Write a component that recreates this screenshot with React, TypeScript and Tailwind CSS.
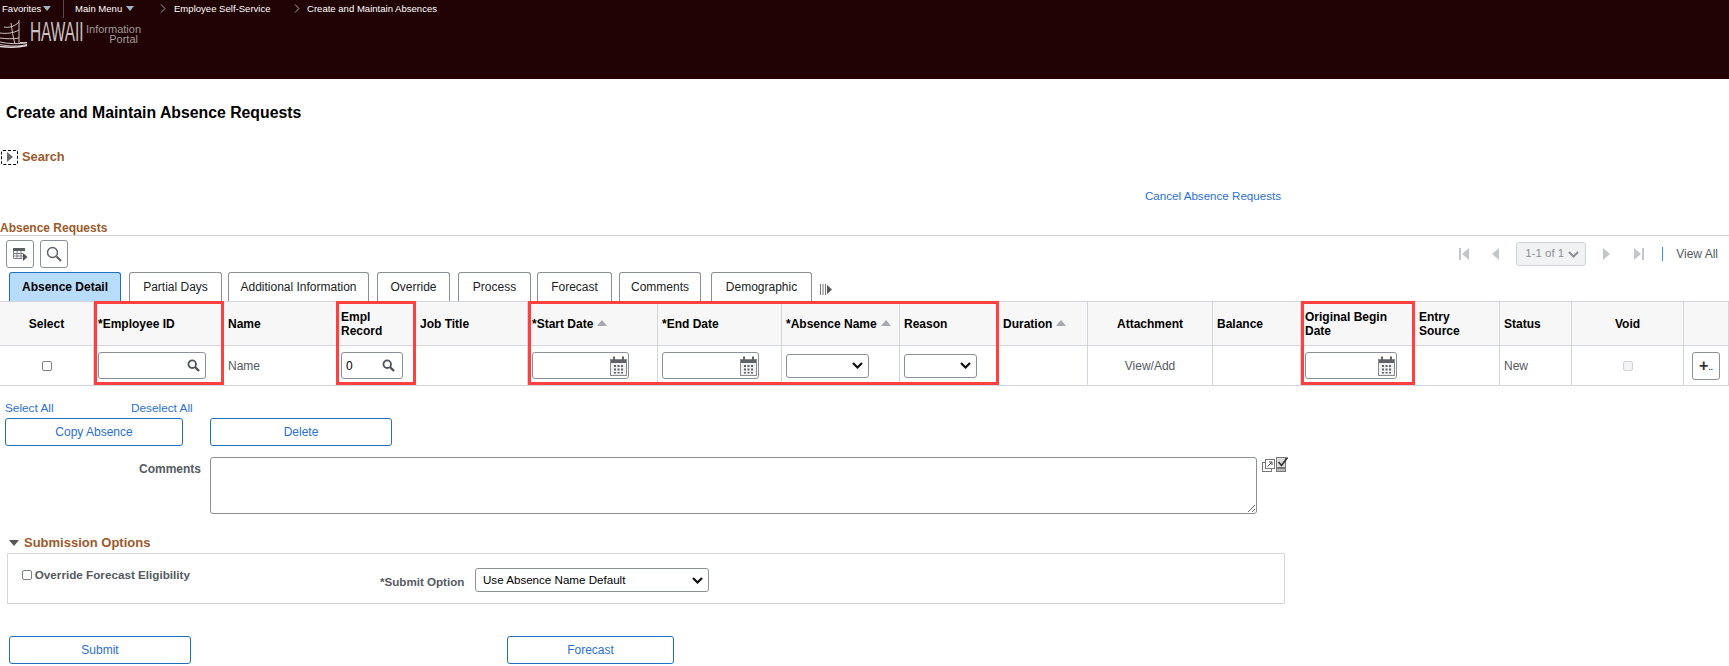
import React from 'react';

const widths = 'grid-cols-[94px_130px_113px_79px_112px_130px_124px_118px_99px_89px_125px_88px_114px_85px_72px_112px_45px]';
const tabs = [
  { label: 'Absence Detail', cls: 'w-[112px] ml-[9px]', active: true },
  { label: 'Partial Days', cls: 'w-[93px] ml-[8px]' },
  { label: 'Additional Information', cls: 'w-[141px] ml-[6px]' },
  { label: 'Override', cls: 'w-[73px] ml-[8px]' },
  { label: 'Process', cls: 'w-[73px] ml-[8px]' },
  { label: 'Forecast', cls: 'w-[75px] ml-[6px]' },
  { label: 'Comments', cls: 'w-[82px] ml-[7px]' },
  { label: 'Demographic', cls: 'w-[101px] ml-[10px]' },
];

const Lens = () => (
  <svg width="13" height="13" viewBox="0 0 13 13" fill="none" stroke="#4d5359">
    <circle cx="5.2" cy="5.2" r="3.8" strokeWidth="1.8" />
    <path d="M8 8l4 4" strokeWidth="2.4" />
  </svg>
);

const Calendar = () => (
  <svg width="17" height="20" viewBox="0 0 17 20">
    <rect x="0.5" y="3.5" width="16" height="16" fill="#f1f1f1" stroke="#8a8a8a" />
    <rect x="1" y="4" width="15" height="3" fill="#5f6368" />
    <rect x="3" y="0.5" width="2" height="5" fill="#5f6368" />
    <rect x="12" y="0.5" width="2" height="5" fill="#5f6368" />
    <path d="M4 9h2v2H4zM7.5 9h2v2h-2zM11 9h2v2h-2zM4 12.500h2v2H4zM7.5 12.500h2v2h-2zM11 12.500h2v2h-2zM4 16h2v1.500H4zM7.5 16h2v1.500h-2zM11 16h2v1.500h-2z" fill="#5f6368" />
  </svg>
);

const Chevron = ({ color = '#111' }: { color?: string }) => (
  <svg width="11" height="7" viewBox="0 0 11 7" fill="none" stroke={color} strokeWidth="2.2">
    <path d="M1 1l4.500 4.500L10 1" />
  </svg>
);

const Crumb = ({ cls }: { cls: string }) => (
  <svg className={cls} width="6" height="9" viewBox="0 0 6 9" fill="none" stroke="#a9a3a3">
    <path d="M1 .5l4 4-4 4" />
  </svg>
);

const Sort = () => <span className="inline-block ml-[4px] mb-[2px] align-middle w-0 h-0 border-x-[5px] border-x-transparent border-b-[6px] border-b-[#a5a8ac]" />;

const Head = ({ children, center }: { children: React.ReactNode; center?: boolean }) => (
  <div className={`flex items-center border-r border-b border-[#d2d5d9] bg-[#f7f7f7] px-[4px] font-bold text-[12px] leading-[14px] text-black ${center ? 'justify-center text-center' : ''}`}>
    <div>{children}</div>
  </div>
);

const Cell = ({ children, center }: { children?: React.ReactNode; center?: boolean }) => (
  <div className={`flex items-center border-r border-[#d2d5d9] px-[4px] text-[12px] text-[#555a60] ${center ? 'justify-center' : ''}`}>{children}</div>
);

const Field = ({ cls, value, icon }: { cls: string; value?: string; icon: React.ReactNode }) => (
  <div className={`${cls} h-[27px] flex items-center border border-[#8a9096] rounded-[3px] bg-white pl-[4px]`}>
    <span className="flex-1 text-[12px] text-black">{value}</span>
    {icon}
  </div>
);

const SelectBox = ({ w }: { w: string }) => (
  <div className={`${w} h-[24px] flex items-center justify-end border border-[#8a9096] rounded-[3px] bg-white pr-[5px]`}>
    <Chevron />
  </div>
);

const Check = ({ muted }: { muted?: boolean }) => (
  <input type="checkbox" disabled={muted} className={`appearance-none w-[10px] h-[10px] rounded-[2px] border ${muted ? 'border-[#cfd2d6] bg-[#f4f4f4]' : 'border-[#7d8288] bg-white'}`} />
);

const OutlineButton = ({ label, cls }: { label: string; cls: string }) => (
  <button className={`${cls} h-[28px] border border-[#1f6fc5] rounded-[3px] bg-white text-[12px] text-[#2a6fd0]`}>{label}</button>
);

const Logo = () => (
  <div className="flex items-start h-[30px] mt-[2px]">
    <svg width="28" height="29" viewBox="0 0 28 29" fill="none" stroke="#dcd8d6" strokeWidth="0.9">
      <path d="M19 1v23M11 4c1 7 2 14 4 21M4 8c4 1 10 0 15-5M0 14c6 1 14 0 19-3M0 19c6 1 14 1 19 0M0 23c8 2 18 2 27 1M0 25.500c9 2 19 2 27 0" />
      <path d="M0 27.500c9 1 19 1 27-1" strokeWidth="1.4" />
      <path d="M20 23.500h7" />
    </svg>
    <span className="ml-[2px] w-[55px] text-[28px] leading-[26px] origin-left scale-x-[0.55] inline-block text-[#c9c4c2]">HAWAII</span>
    <div className="mt-[5px] ml-[1px] text-[11px] leading-[10px] text-right text-[#a09a98] w-[52px]">
      <div className="h-[10px]">Information</div>
      <div className="h-[10px]">Portal</div>
    </div>
  </div>
);

export default function App() {
  return (
    <div className="w-[1729px] h-[666px] overflow-hidden bg-white font-['Liberation_Sans',Arial,sans-serif] text-[12px]">
      <header className="h-[79px] bg-[#210305] text-white border-b border-[#210305]">
        <nav className="h-[17px] flex items-center text-[9.55px] leading-[14px] whitespace-nowrap">
          <span className="ml-[2px] w-[38px]">Favorites</span>
          <span className="ml-[3px] w-0 h-0 border-x-[4px] border-x-transparent border-t-[5px] border-t-[#9db4c8]" />
          <span className="ml-[12px] w-px h-[19px] bg-[#5a4a4a]" />
          <span className="ml-[11px] w-[47px]">Main Menu</span>
          <span className="ml-[4px] w-0 h-0 border-x-[4px] border-x-transparent border-t-[5px] border-t-[#9db4c8]" />
          <Crumb cls="ml-[26px]" />
          <span className="ml-[8px] w-[97px]">Employee Self-Service</span>
          <Crumb cls="ml-[23px]" />
          <span className="ml-[7px]">Create and Maintain Absences</span>
        </nav>
        <Logo />
      </header>

      <h1 className="mt-[25px] ml-[6px] text-[15.8px] leading-[18px] font-bold text-black">Create and Maintain Absence Requests</h1>

      <div className="mt-[27px] h-[16px] flex items-center">
        <span className="ml-px w-[17px] h-[15px] flex items-center justify-center border border-dashed border-black rounded-[2px]">
          <span className="w-0 h-0 border-y-[5px] border-y-transparent border-l-[6px] border-l-[#6b6b6b]" />
        </span>
        <span className="ml-[4px] font-bold text-[12.8px] text-[#9c5a2b]">Search</span>
      </div>

      <div className="mt-[24px] ml-[1145px] text-[11.6px] leading-[14px] whitespace-nowrap text-[#2a6fd0]">Cancel Absence Requests</div>

      <div className="mt-[17px] h-[16px] border-b border-[#d5d7da] font-bold text-[#9c5a2b] leading-[16px]">Absence Requests</div>

      <div className="h-[36px] flex items-center">
        <button className="ml-[6px] w-[28px] h-[28px] flex items-center justify-center border border-[#8a9096] rounded-[3px] bg-white">
          <svg width="15" height="13" viewBox="0 0 15 13">
            <rect x="0" y="0" width="12" height="3" fill="#5a5f64" />
            <path d="M.5 3v7.500h9M0 5.500h10M0 8h10M4 3v7M8 3v7" fill="none" stroke="#7a7f84" />
            <path d="M10 5l4.500 4L10 13z" fill="#4d5359" />
          </svg>
        </button>
        <button className="ml-[6px] w-[28px] h-[28px] flex items-center justify-center border border-[#8a9096] rounded-[3px] bg-white">
          <svg width="16" height="16" viewBox="0 0 16 16" fill="none" stroke="#5a5f64">
            <circle cx="6.500" cy="6.500" r="5" strokeWidth="1.400" />
            <path d="M10.500 10.500l4.500 4.500" strokeWidth="2" />
          </svg>
        </button>
        <div className="ml-auto flex items-center text-[#a8acb0]">
          <span className="w-[2px] h-[12px] bg-[#c4c7ca]" />
          <span className="w-0 h-0 border-y-[6px] border-y-transparent border-r-[7px] border-r-[#c4c7ca] ml-px" />
          <span className="ml-[23px] w-0 h-0 border-y-[6px] border-y-transparent border-r-[7px] border-r-[#c4c7ca]" />
          <div className="ml-[17px] w-[70px] h-[24px] flex items-center justify-between pl-[8px] pr-[6px] border border-[#d0d3d6] rounded-[3px] bg-[#f1f2f3] text-[11.5px] text-[#8d9197]">
            1-1 of 1
            <Chevron color="#8d9197" />
          </div>
          <span className="ml-[17px] w-0 h-0 border-y-[6px] border-y-transparent border-l-[7px] border-l-[#c4c7ca]" />
          <span className="ml-[24px] w-0 h-0 border-y-[6px] border-y-transparent border-l-[7px] border-l-[#c4c7ca]" />
          <span className="w-[2px] h-[12px] bg-[#c4c7ca] ml-px" />
          <span className="ml-[18px] w-px h-[14px] bg-[#4a90c8]" />
          <span className="ml-[13px] mr-[11px] text-[#555a60]">View All</span>
        </div>
      </div>

      <div className="h-[29px] flex items-end">
        {tabs.map((t) => (
          <div key={t.label} className={`${t.cls} h-[29px] flex items-center justify-center border border-b-0 rounded-t-[3px] ${t.active ? 'bg-[#b8dcfb] border-[#1f6fc5] font-bold text-black' : 'bg-white border-[#8a9096] text-[#222]'}`}>
            {t.label}
          </div>
        ))}
        <svg className="ml-[8px] mb-[6px]" width="12" height="11" viewBox="0 0 12 11">
          <path d="M0 0h1v11H0zM2.500 0h1v11h-1zM5 0h1v11H5z" fill="#777" />
          <path d="M7 1l5 4.500L7 10z" fill="#555" />
        </svg>
      </div>

      <div className="relative">
        <div className={`grid ${widths} grid-rows-[44px_39px] border-y border-[#d2d5d9]`}>
          <Head center>Select</Head>
          <Head>*Employee ID</Head>
          <Head>Name</Head>
          <Head>Empl<br />Record</Head>
          <Head>Job Title</Head>
          <Head>*Start Date<Sort /></Head>
          <Head>*End Date</Head>
          <Head>*Absence Name<Sort /></Head>
          <Head>Reason</Head>
          <Head>Duration<Sort /></Head>
          <Head center>Attachment</Head>
          <Head>Balance</Head>
          <Head>Original Begin<br />Date</Head>
          <Head>Entry<br />Source</Head>
          <Head>Status</Head>
          <Head center>Void</Head>
          <Head> </Head>

          <Cell center><Check /></Cell>
          <Cell><Field cls="w-[108px] pr-[5px]" icon={<Lens />} /></Cell>
          <Cell>Name</Cell>
          <Cell><Field cls="w-[62px] pr-[7px]" value="0" icon={<Lens />} /></Cell>
          <Cell />
          <Cell><Field cls="w-[97px] pr-[1px]" icon={<Calendar />} /></Cell>
          <Cell><Field cls="w-[97px] pr-[1px]" icon={<Calendar />} /></Cell>
          <Cell><SelectBox w="w-[83px]" /></Cell>
          <Cell><SelectBox w="w-[73px]" /></Cell>
          <Cell />
          <Cell center>View/Add</Cell>
          <Cell />
          <Cell><Field cls="w-[92px] pr-[1px]" icon={<Calendar />} /></Cell>
          <Cell />
          <Cell>New</Cell>
          <Cell center><Check muted /></Cell>
          <Cell center>
            <button className="w-[28px] h-[28px] flex items-center justify-center border border-[#8a9096] rounded-[3px] bg-white font-bold text-[16px] leading-none text-[#333]">+<span className="text-[8px] self-end mb-[7px]">..</span></button>
          </Cell>
        </div>
        {/* red annotation boxes drawn over the grid */}
        <div className="absolute top-0 left-[94px] w-[130px] h-[84px] border-[3px] border-[#ff4040]" />
        <div className="absolute top-0 left-[336px] w-[80px] h-[84px] border-[3px] border-[#ff4040]" />
        <div className="absolute top-0 left-[528px] w-[471px] h-[84px] border-[3px] border-[#ff4040]" />
        <div className="absolute top-0 left-[1301px] w-[114px] h-[84px] border-[3px] border-[#ff4040]" />
      </div>

      <div className="mt-[15px] h-[14px] flex text-[11.8px] leading-[14px] text-[#2a6fd0]">
        <span className="ml-[5px] w-[126px]">Select All</span>
        <span>Deselect All</span>
      </div>

      <div className="mt-[3px] flex">
        <OutlineButton label="Copy Absence" cls="ml-[5px] w-[178px]" />
        <OutlineButton label="Delete" cls="ml-[27px] w-[182px]" />
      </div>

      <div className="mt-[11px] flex items-start">
        <span className="w-[201px] mt-[3px] text-right font-bold text-[#555a60]">Comments</span>
        <textarea className="ml-[9px] w-[1047px] h-[57px] border border-[#8a9096] rounded-[3px]" />
        <svg className="ml-[5px]" width="27" height="15" viewBox="0 0 27 15" fill="none" stroke="#777">
          <rect x="0.5" y="5.500" width="9" height="9" />
          <rect x="3.500" y="2.500" width="9" height="9" fill="#fff" />
          <path d="M5.500 9.500l4-4M7 5h3v3" stroke="#444" />
          <rect x="14.500" y="0.500" width="9" height="10" fill="#ddd" />
          <path d="M16.500 5l3 3.500 6-8" stroke="#333" strokeWidth="1.700" />
          <rect x="14.500" y="11.500" width="9" height="3" fill="#bbb" />
        </svg>
      </div>

      <div className="mt-[21px] ml-[9px] h-[16px] flex items-center">
        <span className="w-0 h-0 border-x-[5px] border-x-transparent border-t-[6px] border-t-[#555]" />
        <span className="ml-[5px] font-bold text-[13px] text-[#9c5a2b]">Submission Options</span>
      </div>

      <div className="mt-[2px] ml-[7px] w-[1278px] h-[51px] flex border border-[#d5d7da]">
        <div className="ml-[14px] mt-[14px] w-[168px] h-[14px] flex items-center whitespace-nowrap font-bold text-[11.7px] text-[#555a60]">
          <Check />
          <span className="ml-[3px]">Override Forecast Eligibility</span>
        </div>
        <span className="ml-[190px] mt-[21px] w-[86px] h-[14px] whitespace-nowrap font-bold text-[11.6px] text-[#555a60] leading-[14px]">*Submit Option</span>
        <div className="ml-[9px] mt-[14px] w-[234px] h-[24px] flex items-center justify-between border border-[#8a9096] rounded-[3px] pl-[7px] pr-[5px] text-[11.6px] text-black">
          Use Absence Name Default
          <Chevron />
        </div>
      </div>

      <div className="mt-[32px] flex">
        <OutlineButton label="Submit" cls="ml-[9px] w-[182px]" />
        <OutlineButton label="Forecast" cls="ml-[316px] w-[167px]" />
      </div>
    </div>
  );
}
